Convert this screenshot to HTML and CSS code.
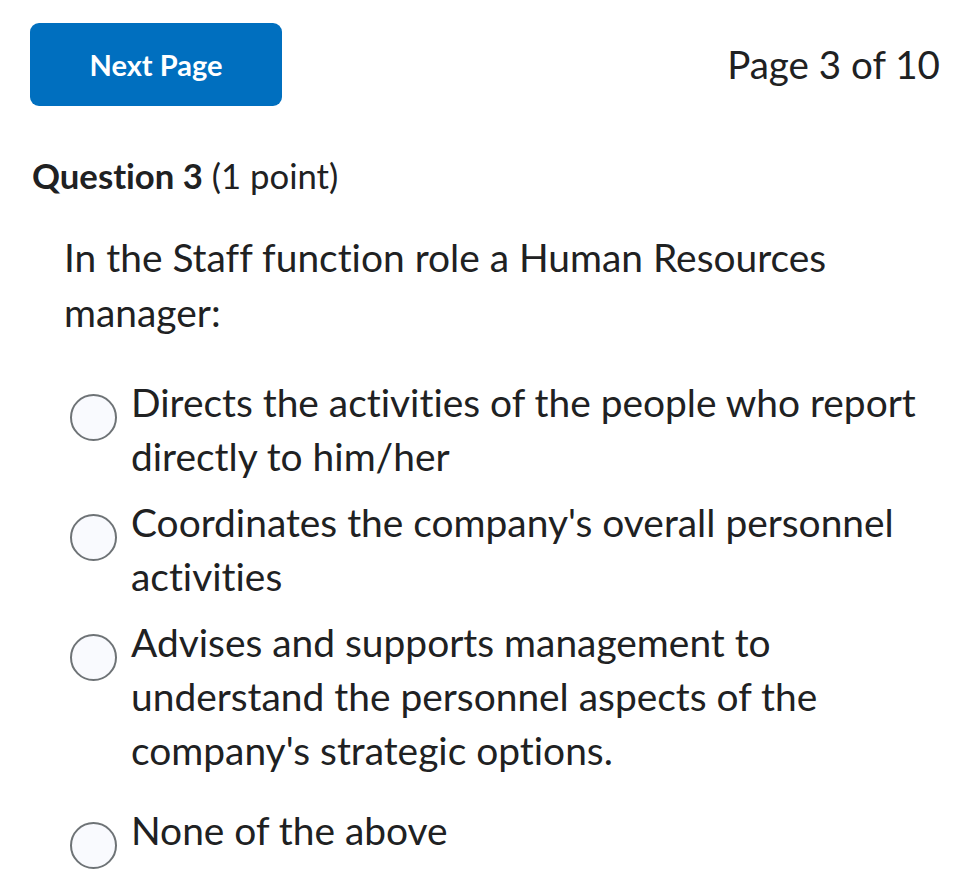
FILE: index.html
```html
<!DOCTYPE html>
<html>
<head>
<meta charset="utf-8">
<link rel="stylesheet" href="styles.css">
</head>
<body>
<div class="page">
  <div class="topbar">
    <button class="next-btn">Next Page</button>
    <div class="pager">Page 3 of 10</div>
  </div>
  <h2 class="qhead"><span class="qnum">Question 3</span> (1 point)</h2>
  <p class="qtext">In the Staff function role a Human Resources manager:</p>
  <ul class="options">
    <li class="option"><span class="radio"></span><span class="otext">Directs the activities of the people who report directly to him/her</span></li>
    <li class="option"><span class="radio"></span><span class="otext">Coordinates the company's overall personnel activities</span></li>
    <li class="option option-tall"><span class="radio"></span><span class="otext">Advises and supports management to understand the personnel aspects of the company's strategic options.</span></li>
    <li class="option"><span class="radio"></span><span class="otext">None of the above</span></li>
  </ul>
</div>
</body>
</html>
```

FILE: styles.css
```css
* { box-sizing: border-box; }
body {
  margin: 0;
  background: #ffffff;
  font-family: Lato, "Noto Sans", sans-serif;
  color: #202122;
  font-variant-ligatures: none;
}
.page {
  padding: 23px 20px 0 30px;
}
.topbar {
  display: flex;
  justify-content: space-between;
  align-items: center;
}
.next-btn {
  width: 252px;
  height: 83px;
  border: none;
  border-radius: 9px;
  background: #006fbf;
  color: #ffffff;
  font-family: Lato, sans-serif;
  font-weight: 700;
  font-size: 29px;
  padding: 0;
}
.pager {
  font-size: 38.6px;
  padding-bottom: 2px;
}
.qhead {
  margin: 50px 0 0 2px;
  font-size: 34.7px;
  font-weight: 400;
  line-height: 40px;
}
.qnum { font-weight: 700; }
.qtext {
  margin: 34px 0 0 34px;
  font-size: 38.9px;
  line-height: 55px;
  max-width: 820px;
}
.options {
  list-style: none;
  margin: 35px 0 0 40px;
  padding: 0;
}
.option {
  display: flex;
  align-items: flex-start;
  margin-bottom: 12px;
}
.option-tall {
  margin-bottom: 26px;
}
.radio {
  flex: none;
  width: 47px;
  height: 47px;
  border-radius: 50%;
  border: 2px solid #6e7376;
  background: #f9fafe;
  margin-top: 19px;
  margin-right: 14px;
}
.otext {
  font-size: 38.9px;
  line-height: 54px;
  max-width: 800px;
}
```
